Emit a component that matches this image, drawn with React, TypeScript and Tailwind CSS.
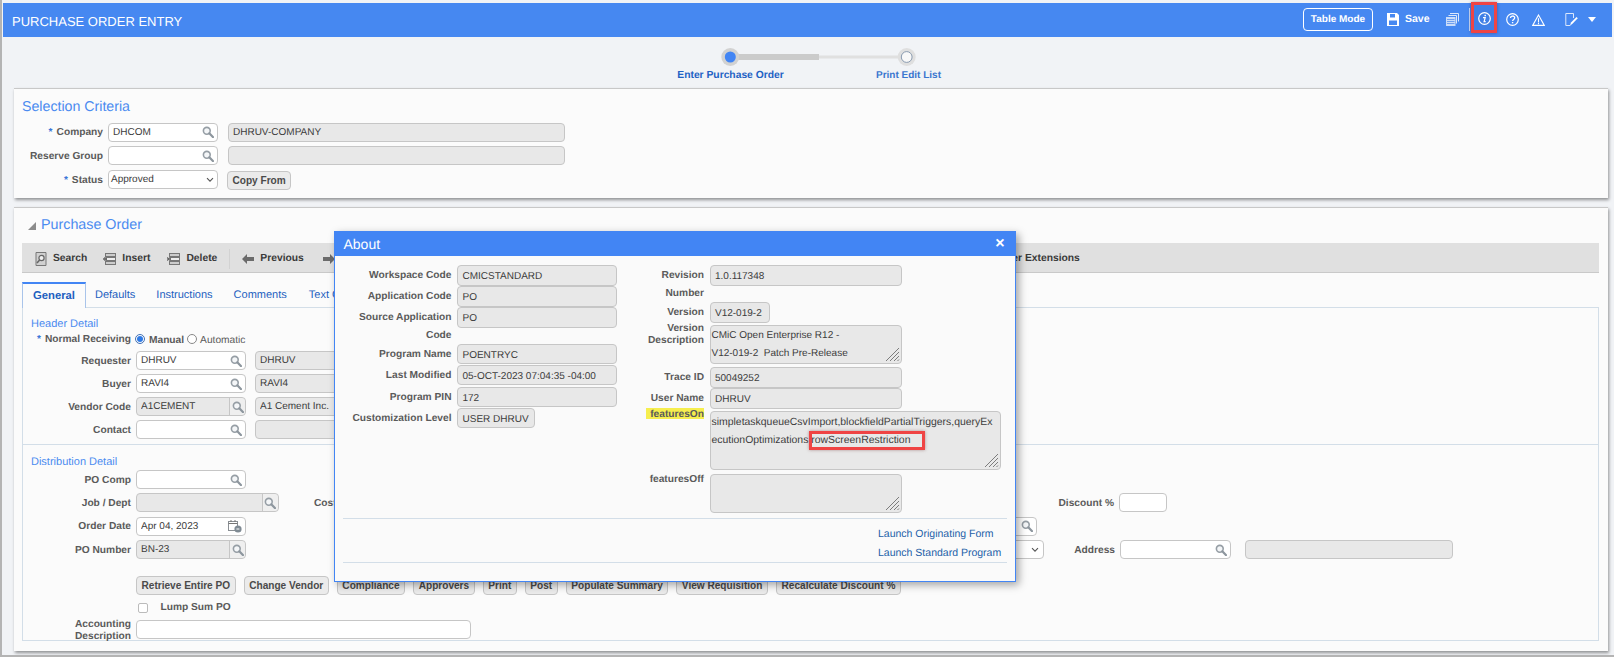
import type { ReactNode } from "react";

function SearchIcon() {
  return (
    <svg width="12" height="12" viewBox="0 0 12 12" fill="none" className="shrink-0">
      <circle cx="4.8" cy="4.8" r="3.4" stroke="#969ea5" strokeWidth="1.6" fill="#f4f6f8" />
      <path d="M7.3 7.3l3.6 3.8" stroke="#8d969e" strokeWidth="2.2" strokeLinecap="round" />
    </svg>
  );
}

function CalendarIcon() {
  return (
    <svg width="14" height="13" viewBox="0 0 14 13" fill="none" className="shrink-0">
      <rect x="0.5" y="1.5" width="9" height="9" fill="none" stroke="#8a8f94" />
      <path d="M0.5 3.5h9M3 0v2M7 0v2" stroke="#777" />
      <circle cx="10" cy="9" r="3.6" fill="#7f8a93" />
      <path d="M8.4 9h3" stroke="#fff" />
    </svg>
  );
}

function Chevron() {
  return (
    <svg width="8" height="6" viewBox="0 0 8 6" fill="none" className="shrink-0">
      <path d="M1 1.2l3 3 3-3" stroke="#555" strokeWidth="1.1" />
    </svg>
  );
}

function Grip() {
  return (
    <svg width="15" height="15" viewBox="0 0 15 15" fill="none" className="absolute right-[1px] bottom-[1px]">
      <path d="M1 14L14 1M5 14L14 5M9 14l5-5M12.5 14l1.5-1.5" stroke="#7c7c7c" strokeWidth="1" />
    </svg>
  );
}

type FieldProps = {
  w: number | string;
  value?: string;
  gray?: boolean;
  search?: boolean;
  cell?: boolean;
  children?: ReactNode;
  className?: string;
};

function Field({ w, value, gray, search, cell, children, className = "" }: FieldProps) {
  return (
    <div
      style={{ width: w }}
      className={`h-[19px] shrink-0 flex items-center rounded-[4px] border border-[#c6c6c6] pl-[4px] text-[10px] text-[#3c3c3c] ${
        gray ? "bg-[#e8e8e8]" : "bg-white"
      } ${className}`}
    >
      <span className="flex-1 whitespace-nowrap overflow-hidden">{value}</span>
      {search && !cell && (
        <span className="mr-[3px]">
          <SearchIcon />
        </span>
      )}
      {search && cell && (
        <span className="h-full w-[16px] flex items-center justify-center border-l border-[#c6c6c6] bg-[#efefef] rounded-r-[4px]">
          <SearchIcon />
        </span>
      )}
      {children}
    </div>
  );
}

function Label({ w = 108, children }: { w?: number; children: ReactNode }) {
  return (
    <div style={{ width: w }} className="shrink-0 pt-[2px] text-right font-bold text-[10.2px] leading-[12px] text-[#5a5a5a] whitespace-nowrap">
      {children}
    </div>
  );
}

function Req() {
  return <span className="text-[#3b78d8] mr-[4px]">*</span>;
}

function Btn({ children }: { children: ReactNode }) {
  return (
    <button
      type="button"
      className="h-[19px] shrink-0 px-[4.5px] rounded-[4px] border border-[#c6c6c6] bg-[#ebebeb] text-[10.1px] font-bold text-[#4a4a4a] whitespace-nowrap"
    >
      {children}
    </button>
  );
}

function Row({ className = "", children }: { className?: string; children: ReactNode }) {
  return <div className={`flex items-center h-[19px] ${className}`}>{children}</div>;
}

function ToolIcon({ kind }: { kind: "search" | "insert" | "delete" | "prev" | "next" }) {
  if (kind === "prev" || kind === "next") {
    return (
      <svg width="12" height="10" viewBox="0 0 12 10" className="shrink-0">
        <path
          d={kind === "prev" ? "M0 5l5-5v3h7v4H5v3z" : "M12 5L7 0v3H0v4h7v3z"}
          fill="#6b6b6b"
        />
      </svg>
    );
  }
  if (kind === "search") {
    return (
      <svg width="12" height="14" viewBox="0 0 12 14" fill="none" className="shrink-0">
        <path d="M1 .5h10v13H1z" fill="#d0d0d0" stroke="#777" />
        <circle cx="6.5" cy="6" r="2.6" stroke="#666" strokeWidth="1.2" fill="#eee" />
        <path d="M4.6 8L2 11" stroke="#666" strokeWidth="1.6" />
      </svg>
    );
  }
  return (
    <svg width="13" height="12" viewBox="0 0 13 12" fill="none" className="shrink-0">
      <rect x="2.5" y="0.5" width="10" height="3" fill="#ccc" stroke="#777" />
      <rect x="3.5" y="4.5" width="9" height="3" fill="#eee" stroke="#777" />
      <rect x="2.5" y="8.5" width="10" height="3" fill="#ccc" stroke="#777" />
      {kind === "insert" ? (
        <path d="M0 6h4M2 4v4" stroke="#666" strokeWidth="1.3" />
      ) : (
        <path d="M0 4.5l3 3M3 4.5l-3 3" stroke="#666" strokeWidth="1.2" />
      )}
    </svg>
  );
}

function ToolItem({ icon, children, className = "" }: { icon: "search" | "insert" | "delete" | "prev" | "next"; children: ReactNode; className?: string }) {
  return (
    <div className={`flex items-center gap-[6px] font-bold text-[10.3px] text-[#3a3a3a] ${className}`}>
      <ToolIcon kind={icon} />
      {children}
    </div>
  );
}

function AboutRow({ label, w, value, h = 21, labelW }: { label: ReactNode; w: number; value: string; h?: number; labelW: number }) {
  return (
    <div style={{ height: h }} className="flex">
      <div style={{ width: labelW }} className="shrink-0 pt-[2px] text-right font-bold text-[10.2px] leading-[18px] text-[#5a5a5a]">
        {label}
      </div>
      <div
        style={{ width: w }}
        className="ml-[5.5px] h-[20.5px] shrink-0 flex items-center rounded-[4px] border border-[#c6c6c6] bg-[#e8e8e8] pl-[4.5px] pt-[3px] text-[10px] text-[#3c3c3c] whitespace-nowrap"
      >
        {value}
      </div>
    </div>
  );
}

function AboutDialog() {
  return (
    <div className="absolute left-[332px] top-[231px] w-[681.5px] h-[351px] bg-[#fafafa] border border-[#4285f4] shadow-[3px_3px_8px_rgba(0,0,0,0.35)]">
      <div className="h-[25px] -mt-px flex items-center justify-between bg-[#4285f4] pl-[8.5px] pr-[10px] text-white">
        <span className="text-[14px] leading-none">About</span>
        <span className="text-[16px] font-bold leading-none">×</span>
      </div>

      <div className="flex pt-[9px]">
        <div className="w-[281.5px] shrink-0">
          <AboutRow labelW={116.5} w={160} label="Workspace Code" value="CMICSTANDARD" />
          <AboutRow labelW={116.5} w={160} label="Application Code" value="PO" />
          <AboutRow labelW={116.5} w={160} h={36.5} label={<>Source Application<br />Code</>} value="PO" />
          <AboutRow labelW={116.5} w={160} label="Program Name" value="POENTRYC" />
          <AboutRow labelW={116.5} w={160} h={22} label="Last Modified" value="05-OCT-2023 07:04:35 -04:00" />
          <AboutRow labelW={116.5} w={160} label="Program PIN" value="172" />
          <AboutRow labelW={116.5} w={78} label="Customization Level" value="USER DHRUV" />
        </div>

        <div className="ml-[8.5px] flex-1">
          <AboutRow labelW={79} w={192} h={37} label={<>Revision<br />Number</>} value="1.0.117348" />
          <AboutRow labelW={79} w={60} h={23} label="Version" value="V12-019-2" />
          <div className="flex h-[42px]">
            <div className="w-[79px] shrink-0 -mt-[2px] text-right font-bold text-[10.2px] leading-[12px] text-[#5a5a5a]">
              Version
              <br />
              Description
            </div>
            <div className="relative ml-[5.5px] w-[192px] h-[38.5px] rounded-[4px] border border-[#c6c6c6] bg-[#e8e8e8] pl-[1px] pt-[1px] text-[10px] leading-[18px] text-[#3c3c3c] whitespace-pre">
              {"CMiC Open Enterprise R12 -\nV12-019-2  Patch Pre-Release"}
              <Grip />
            </div>
          </div>
          <AboutRow labelW={79} w={192} label="Trace ID" value="50049252" />
          <AboutRow labelW={79} w={192} h={23} label="User Name" value="DHRUV" />
          <div className="flex h-[63px]">
            <div className="w-[79px] shrink-0 -mt-[3px] flex justify-end">
              <span className="h-[11px] w-[58px] pt-px bg-[#f6ee4e] text-right font-bold text-[10.2px] leading-[11px] text-[#5a5a5a]">
                featuresOn
              </span>
            </div>
            <div className="relative ml-[5.5px] w-[291.5px] h-[58.5px] rounded-[4px] border border-[#c6c6c6] bg-[#e8e8e8] pl-[1px] pt-[1.5px] text-[10.45px] leading-[18px] text-[#3c3c3c] whitespace-pre">
              {"simpletaskqueueCsvImport,blockfieldPartialTriggers,queryEx\necutionOptimizations,rowScreenRestriction"}
              <Grip />
              <div className="absolute left-[98px] top-[19px] w-[116px] h-[19px] border-[3px] border-[#ef4444] shadow-[0_0_3px_rgba(120,60,60,0.5)]" />
            </div>
          </div>
          <div className="flex">
            <div className="w-[79px] shrink-0 text-right font-bold text-[10.2px] leading-[12px] text-[#5a5a5a]">
              featuresOff
            </div>
            <div className="relative ml-[5.5px] w-[192px] h-[38.5px] rounded-[4px] border border-[#c6c6c6] bg-[#e8e8e8]">
              <Grip />
            </div>
          </div>
        </div>
      </div>

      <div className="mx-[8px] mt-[5.5px] border-t border-[#d3dee8]" />
      <div className="pl-[543px] pt-[6px] text-[10.5px] leading-[19px] text-[#1d5fa8]">
        <div>Launch Originating Form</div>
        <div>Launch Standard Program</div>
      </div>
      <div className="mx-[8px] mt-[-1px] border-t border-[#d3dee8]" />
    </div>
  );
}

function TopBar() {
  return (
    <div className="h-[33.7px] w-[1609px] flex items-center bg-[#4688f1] pl-[9px] pr-[16px] text-white">
      <span className="pt-[3px] text-[13px]">PURCHASE ORDER ENTRY</span>
      <div className="ml-auto h-full flex items-center">
        <div className="w-[70px] h-[23px] flex items-center justify-center rounded-[4px] border border-white font-bold text-[10px]">
          Table Mode
        </div>
        <svg width="12" height="13" viewBox="0 0 12 13" className="ml-[14px] shrink-0">
          <path d="M0 0h10l2 2v11H0z" fill="#fff" />
          <path d="M3 1h5v3.5H3z" fill="#4688f1" />
          <path d="M2 7.5h8V12H2z" fill="#4688f1" />
        </svg>
        <span className="ml-[6px] w-[25px] font-bold text-[10.5px]">Save</span>
        <svg width="13" height="13" viewBox="0 0 13 13" fill="none" className="ml-[16px] shrink-0">
          <path d="M4 .5h8.5v8" stroke="#dce8fb" />
          <path d="M2.5 2.5h8v8" stroke="#dce8fb" />
          <rect x="0" y="4" width="9.5" height="9" fill="#c9dcf9" />
          <path d="M1 6.5h7.5M1 8.5h7.5M1 10.5h7.5" stroke="#6f9ff0" />
        </svg>
        <div className="ml-[10px] w-px h-[23px] bg-[#c8d9f7]" />
        <div className="ml-[1px] -mt-[5px] w-[26px] h-[31px] flex items-center justify-center border-[3px] border-[#ef4444] bg-[#3f7fe6] shadow-[0_0_3px_rgba(60,40,80,0.5)]">
          <svg width="13" height="13" viewBox="0 0 13 13" fill="none" className="shrink-0 mt-[2px]">
            <circle cx="6.5" cy="6.5" r="5.8" stroke="#fff" strokeWidth="1.2" />
            <path d="M7.2 2.8v1.4" stroke="#fff" strokeWidth="1.5" />
            <path d="M5 5.6h2.2l-1.1 4h1.6" stroke="#fff" strokeWidth="1.2" />
          </svg>
        </div>
        <svg width="13" height="13" viewBox="0 0 13 13" fill="none" className="ml-[9px] shrink-0">
          <circle cx="6.5" cy="6.5" r="5.8" stroke="#fff" strokeWidth="1.2" />
          <path d="M4.5 5c0-2.6 4.2-2.6 4.2-.2 0 1.6-2.1 1.6-2.1 3.2" stroke="#fff" strokeWidth="1.3" />
          <path d="M6.6 9v1.3" stroke="#fff" strokeWidth="1.4" />
        </svg>
        <svg width="13" height="12" viewBox="0 0 13 12" fill="none" className="ml-[13px] shrink-0">
          <path d="M6.5 1L12.3 11.4H.7z" stroke="#fff" strokeWidth="1.1" />
          <path d="M6.5 4.2v4.2M6.5 9v1.2" stroke="#fff" strokeWidth="1.1" />
        </svg>
        <svg width="13" height="13" viewBox="0 0 13 13" fill="none" className="ml-[20px] shrink-0">
          <path d="M8.5 5V.5H.8v12h4.5" stroke="#dbe7fb" />
          <path d="M5 12.5l1-3L11.5 4l1.3 1.3L7.2 11z" fill="#fff" />
        </svg>
        <svg width="8" height="5" viewBox="0 0 8 5" className="ml-[10px] shrink-0">
          <path d="M0 0h8L4 5z" fill="#fff" />
        </svg>
      </div>
    </div>
  );
}

function Stepper() {
  return (
    <div className="h-[51.3px] pt-[8.3px]">
      <svg width="204" height="24" viewBox="0 0 204 24" className="ml-[715px] block">
        <rect x="90" y="10.5" width="96" height="3" fill="#e0e0e0" />
        <rect x="12" y="9" width="89" height="6" fill="#cbcbcb" />
        <circle cx="12.3" cy="12" r="9" fill="#d2d2d2" />
        <circle cx="12.3" cy="12" r="5.5" fill="#4285f4" />
        <circle cx="188.7" cy="12" r="9" fill="#dfdfdf" />
        <circle cx="188.7" cy="12" r="5.4" fill="#f8f8f8" stroke="#8a9bb0" />
      </svg>
      <div className="flex pt-px text-[10.3px] font-bold leading-[12px] text-[#1f62c4]">
        <span className="ml-[674.3px] w-[107px] whitespace-nowrap">Enter Purchase Order</span>
        <span className="ml-[91.7px] text-[10px] text-[#3a76cf]">Print Edit List</span>
      </div>
    </div>
  );
}

function SelectionCriteria() {
  return (
    <div className="h-[110px] ml-[10.6px] w-[1594.4px] border-t border-t-[#c8c8c8] bg-[#fbfbfb] shadow-[1px_2px_3px_rgba(0,0,0,0.4)] pl-[8.4px]">
      <div className="pt-[10px] h-[34px] text-[14.2px] leading-[17px] text-[#4b8bf0]">Selection Criteria</div>
      <Row>
        <Label w={81}>
          <Req />
          Company
        </Label>
        <div className="w-[5px]" />
        <Field w={110} value="DHCOM" search />
        <Field w={337} value="DHRUV-COMPANY" gray className="ml-[10px]" />
      </Row>
      <Row className="mt-[4.5px]">
        <Label w={81}>Reserve Group</Label>
        <div className="w-[5px]" />
        <Field w={110} search />
        <Field w={337} gray className="ml-[10px]" />
      </Row>
      <Row className="mt-[5px]">
        <Label w={81}>
          <Req />
          Status
        </Label>
        <div className="w-[5px]" />
        <div className="w-[110px] h-[19px] flex items-center rounded-[4px] border border-[#c6c6c6] bg-white pl-[2px] pr-[3px] text-[10px] text-[#3c3c3c]">
          <span className="flex-1">Approved</span>
          <Chevron />
        </div>
        <div className="ml-[9px]">
          <Btn>Copy From</Btn>
        </div>
      </Row>
    </div>
  );
}

function PurchaseOrder() {
  return (
    <div className="mt-[9px] h-[444px] ml-[10.6px] w-[1594.4px] border-t border-t-[#c8c8c8] bg-[#fbfbfb] shadow-[1px_2px_3px_rgba(0,0,0,0.4)] pl-[8.4px] pr-[9px]">
      <div className="h-[35.3px] flex items-center pl-[6px]">
        <svg width="8" height="8" viewBox="0 0 8 8" className="shrink-0">
          <path d="M8 0v8H0z" fill="#8c8c8c" />
        </svg>
        <span className="ml-[5px] text-[14.3px] text-[#4b8bf0]">Purchase Order</span>
      </div>

      <div className="h-[29.5px] flex items-center bg-[#e0e0e0] border-b border-[#c9c9c9] pl-[13px] pt-[2px]">
        <ToolItem icon="search">Search</ToolItem>
        <ToolItem icon="insert" className="ml-[16px]">Insert</ToolItem>
        <ToolItem icon="delete" className="ml-[17px]">Delete</ToolItem>
        <div className="ml-[12px] h-[20px] w-px bg-[#d2d2d2]" />
        <ToolItem icon="prev" className="ml-[12px]">Previous</ToolItem>
        <ToolItem icon="next" className="ml-[19px]">Next</ToolItem>
        <span className="ml-[636px] font-bold text-[10.3px] text-[#3a3a3a]">User Extensions</span>
      </div>

      <div className="h-[34.5px] pt-[9px] flex items-end text-[11px] text-[#1d5fc0]">
        <div className="h-[26px] w-[64px] flex items-center justify-center border-t-2 border-x border-t-[#4285f4] border-x-[#a9c4ea] bg-[#fbfbfb] font-bold text-[11.3px] -mb-px relative">
          General
        </div>
        <span className="ml-[9px] h-[25px] flex items-center">Defaults</span>
        <span className="ml-[21px] h-[25px] flex items-center">Instructions</span>
        <span className="ml-[21px] h-[25px] flex items-center">Comments</span>
        <span className="ml-[22px] h-[25px] flex items-center whitespace-nowrap">Text C</span>
      </div>

      <div className="h-[334px] border border-[#d3dee8]">
        <div className="h-[137px] border-b border-[#d3dee8]">
          <div className="pt-[9px] pl-[8px] h-[23px] text-[11px] leading-[14px] text-[#4b8bf0]">Header Detail</div>
          <div className="flex items-center h-[14px] mt-[1px]">
            <Label>
              <Req />
              Normal Receiving
            </Label>
            <span className="ml-[4px] w-[10px] h-[10px] rounded-full border border-[#3f6fb5] flex items-center justify-center">
              <span className="w-[6px] h-[6px] rounded-full bg-[#2f7ae5]" />
            </span>
            <span className="ml-[4px] pt-[2px] text-[10.2px] text-[#5a5a5a] font-bold">Manual</span>
            <span className="ml-[3px] w-[10px] h-[10px] rounded-full border border-[#888] bg-white" />
            <span className="ml-[3px] pt-[2px] text-[10.2px] text-[#5a5a5a]">Automatic</span>
          </div>
          <Row className="mt-[5px]">
            <Label>Requester</Label>
            <Field w={110.5} value="DHRUV" search className="ml-[5px]" />
            <Field w={300} value="DHRUV" gray className="ml-[8.5px]" />
          </Row>
          <Row className="mt-[4px]">
            <Label>Buyer</Label>
            <Field w={110.5} value="RAVI4" search className="ml-[5px]" />
            <Field w={300} value="RAVI4" gray className="ml-[8.5px]" />
          </Row>
          <Row className="mt-[4px]">
            <Label>Vendor Code</Label>
            <Field w={110.5} value="A1CEMENT" gray search cell className="ml-[5px]" />
            <Field w={300} value="A1 Cement Inc." gray className="ml-[8.5px]" />
          </Row>
          <Row className="mt-[4px]">
            <Label>Contact</Label>
            <Field w={110.5} search className="ml-[5px]" />
            <Field w={300} gray className="ml-[8.5px]" />
          </Row>
        </div>

        <div className="pt-[10px] pl-[8px] h-[24px] text-[11px] leading-[14px] text-[#4b8bf0]">Distribution Detail</div>
        <Row className="mt-[1px]">
          <Label>PO Comp</Label>
          <Field w={110.5} search className="ml-[5px]" />
        </Row>
        <Row className="mt-[4px]">
          <Label>Job / Dept</Label>
          <Field w={143} gray search cell className="ml-[5px]" />
          <div className="ml-[35px] w-[60px] pt-[2px] font-bold text-[10.2px] text-[#5a5a5a]">Cost Code</div>
          <div className="w-[740px] pt-[2px] text-right font-bold text-[10.2px] text-[#5a5a5a]">Discount %</div>
          <Field w={48} className="ml-[5px]" />
        </Row>
        <Row className="mt-[4.5px]">
          <Label>Order Date</Label>
          <Field w={110.5} value="Apr 04, 2023" className="ml-[5px]">
            <span className="mr-[3px]">
              <CalendarIcon />
            </span>
          </Field>
          <Field w={108} search className="ml-[683px]" />
        </Row>
        <Row className="mt-[4.5px]">
          <Label>PO Number</Label>
          <Field w={110.5} value="BN-23" gray search cell className="ml-[5px]" />
          <div className="ml-[693px] w-[104.5px] h-[19px] flex items-center justify-end rounded-[4px] border border-[#c6c6c6] bg-white pr-[4px]">
            <Chevron />
          </div>
          <div className="w-[71px] pt-[2px] text-right font-bold text-[10.2px] text-[#5a5a5a]">Address</div>
          <Field w={111} search className="ml-[5px]" />
          <Field w={208} gray className="ml-[14.5px]" />
        </Row>
        <div className="flex gap-[8.1px] mt-[17px] pl-[113px]">
          <Btn>Retrieve Entire PO</Btn>
          <Btn>Change Vendor</Btn>
          <Btn>Compliance</Btn>
          <Btn>Approvers</Btn>
          <Btn>Print</Btn>
          <Btn>Post</Btn>
          <Btn>Populate Summary</Btn>
          <Btn>View Requisition</Btn>
          <Btn>Recalculate Discount %</Btn>
        </div>
        <div className="flex items-center h-[12px] mt-[6.5px] pl-[115.5px]">
          <span className="w-[10px] h-[10px] rounded-[2px] border border-[#bbb] bg-white" />
          <span className="ml-[12px] font-bold text-[10.2px] text-[#5a5a5a]">Lump Sum PO</span>
        </div>
        <div className="flex mt-[6px]">
          <div className="w-[108px] -mt-[1px] text-right font-bold text-[10.2px] leading-[12px] text-[#5a5a5a]">
            Accounting
            <br />
            Description
          </div>
          <Field w={335} className="ml-[5px]" />
        </div>
      </div>
    </div>
  );
}

export default function App() {
  return (
    <div className="relative w-[1614px] h-[657px] overflow-hidden bg-[#f1f3f6] border-l-2 border-b-2 border-[#b4b4b4] pl-px pt-[3px] font-['Liberation_Sans',Arial,sans-serif] [text-rendering:geometricPrecision]">
      <TopBar />
      <Stepper />
      <SelectionCriteria />
      <PurchaseOrder />
      <AboutDialog />
    </div>
  );
}
